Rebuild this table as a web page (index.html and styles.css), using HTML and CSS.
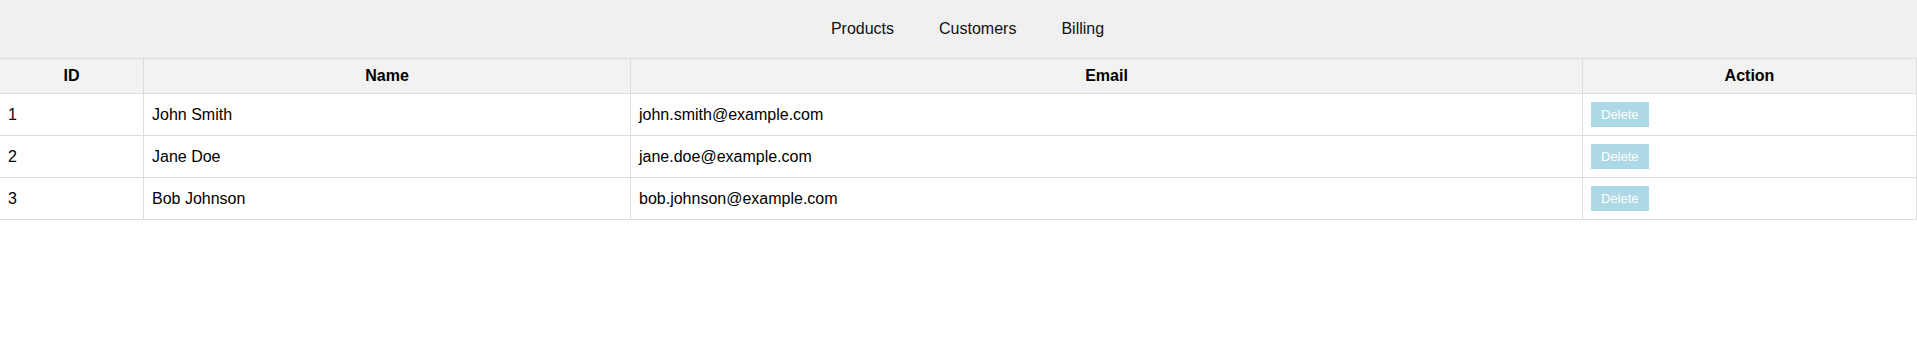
FILE: index.html
```html
<!DOCTYPE html>
<html lang="en">
<head>
<meta charset="utf-8">
<title>Customers</title>
<link rel="stylesheet" href="styles.css">
</head>
<body>
<nav class="nav">
  <a class="nav-link" href="#">Products</a>
  <a class="nav-link" href="#">Customers</a>
  <a class="nav-link" href="#">Billing</a>
</nav>
<table class="data-table">
  <thead>
    <tr><th>ID</th><th>Name</th><th>Email</th><th>Action</th></tr>
  </thead>
  <tbody>
    <tr><td>1</td><td>John Smith</td><td>john.smith@example.com</td><td><button class="btn-delete">Delete</button></td></tr>
    <tr><td>2</td><td>Jane Doe</td><td>jane.doe@example.com</td><td><button class="btn-delete">Delete</button></td></tr>
    <tr><td>3</td><td>Bob Johnson</td><td>bob.johnson@example.com</td><td><button class="btn-delete">Delete</button></td></tr>
  </tbody>
</table>
</body>
</html>
```
FILE: styles.css
```css
body {
  margin: 0;
  font-family: "Liberation Sans", Arial, sans-serif;
  font-size: 16px;
  color: #000;
  background: #fff;
  overflow-x: hidden;
}
.nav {
  background: #f0f0f0;
  padding: 20px 0 20px 18px;
  display: flex;
  justify-content: center;
  gap: 45px;
  line-height: 18px;
}
.nav-link {
  color: #111;
  text-decoration: none;
}
.data-table {
  width: calc(100% + 1px);
  margin-left: -1px;
  border-collapse: collapse;
}
.data-table th,
.data-table td {
  border: 1px solid #ddd;
  padding: 8px;
  text-align: left;
  line-height: 18px;
}
.data-table th {
  background: #f2f2f2;
  text-align: center;
  font-weight: bold;
}
.data-table th:nth-child(1) { width: 127px; }
.data-table th:nth-child(2) { width: 470px; }
.data-table th:nth-child(3) { width: 935px; }
.btn-delete {
  background: #add8e6;
  color: #fff;
  border: none;
  padding: 5px 10px;
  font-family: "Liberation Sans", Arial, sans-serif;
  font-size: 13px;
  line-height: 15px;
  display: block;
}
```
